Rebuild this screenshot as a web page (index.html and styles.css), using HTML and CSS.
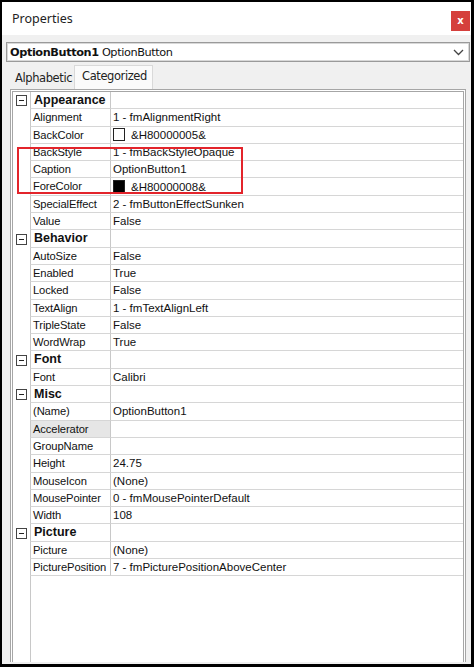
FILE: index.html
```html
<!DOCTYPE html>
<html>
<head>
<meta charset="utf-8">
<link rel="stylesheet" href="styles.css">
</head>
<body>
<div class="window">
  <div class="titlebar">
    <span class="title">Properties</span>
    <span class="close">x</span>
  </div>
  <div class="panel">
    <div class="combo">
      <span class="combo-text"><b>OptionButton1</b> OptionButton</span>
      <svg class="chev" width="11" height="7" viewBox="0 0 11 7"><polyline points="1,1 5.5,5.5 10,1" fill="none" stroke="#444" stroke-width="1.3"/></svg>
    </div>
    <div class="tabs">
      <span class="tab">Alphabetic</span>
      <span class="tab active">Categorized</span>
    </div>
    <div class="grid">
      <div class="row cat"><span class="gut"><span class="minus"></span></span><span class="name">Appearance</span><span class="val"></span></div>
      <div class="row"><span class="gut"></span><span class="name">Alignment</span><span class="val">1 - fmAlignmentRight</span></div>
      <div class="row"><span class="gut"></span><span class="name">BackColor</span><span class="val"><span class="swatch white"></span>&amp;H80000005&amp;</span></div>
      <div class="row"><span class="gut"></span><span class="name">BackStyle</span><span class="val">1 - fmBackStyleOpaque</span></div>
      <div class="row"><span class="gut"></span><span class="name">Caption</span><span class="val">OptionButton1</span></div>
      <div class="row"><span class="gut"></span><span class="name">ForeColor</span><span class="val"><span class="swatch black"></span>&amp;H80000008&amp;</span></div>
      <div class="row"><span class="gut"></span><span class="name">SpecialEffect</span><span class="val">2 - fmButtonEffectSunken</span></div>
      <div class="row"><span class="gut"></span><span class="name">Value</span><span class="val">False</span></div>
      <div class="row cat"><span class="gut"><span class="minus"></span></span><span class="name">Behavior</span><span class="val"></span></div>
      <div class="row"><span class="gut"></span><span class="name">AutoSize</span><span class="val">False</span></div>
      <div class="row"><span class="gut"></span><span class="name">Enabled</span><span class="val">True</span></div>
      <div class="row"><span class="gut"></span><span class="name">Locked</span><span class="val">False</span></div>
      <div class="row"><span class="gut"></span><span class="name">TextAlign</span><span class="val">1 - fmTextAlignLeft</span></div>
      <div class="row"><span class="gut"></span><span class="name">TripleState</span><span class="val">False</span></div>
      <div class="row"><span class="gut"></span><span class="name">WordWrap</span><span class="val">True</span></div>
      <div class="row cat"><span class="gut"><span class="minus"></span></span><span class="name">Font</span><span class="val"></span></div>
      <div class="row"><span class="gut"></span><span class="name">Font</span><span class="val">Calibri</span></div>
      <div class="row cat"><span class="gut"><span class="minus"></span></span><span class="name">Misc</span><span class="val"></span></div>
      <div class="row"><span class="gut"></span><span class="name">(Name)</span><span class="val">OptionButton1</span></div>
      <div class="row"><span class="gut"></span><span class="name sel">Accelerator</span><span class="val"></span></div>
      <div class="row"><span class="gut"></span><span class="name">GroupName</span><span class="val"></span></div>
      <div class="row"><span class="gut"></span><span class="name">Height</span><span class="val">24.75</span></div>
      <div class="row"><span class="gut"></span><span class="name">MouseIcon</span><span class="val">(None)</span></div>
      <div class="row"><span class="gut"></span><span class="name">MousePointer</span><span class="val">0 - fmMousePointerDefault</span></div>
      <div class="row"><span class="gut"></span><span class="name">Width</span><span class="val">108</span></div>
      <div class="row cat"><span class="gut"><span class="minus"></span></span><span class="name">Picture</span><span class="val"></span></div>
      <div class="row"><span class="gut"></span><span class="name">Picture</span><span class="val">(None)</span></div>
      <div class="row"><span class="gut"></span><span class="name">PicturePosition</span><span class="val">7 - fmPicturePositionAboveCenter</span></div>
      <div class="filler"><span class="gut"></span><span class="rest"></span></div>
      <div class="highlight"></div>
    </div>
  </div>
</div>
</body>
</html>
```

FILE: styles.css
```css
html, body {
  margin: 0;
  padding: 0;
  background: #000;
}
body {
  width: 474px;
  height: 667px;
  overflow: hidden;
  font-family: "Liberation Sans", Arial, sans-serif;
}
.window {
  margin: 2px 3px 3px 2px;
  height: 662px;
  background: #f0f0f0;
  display: flex;
  flex-direction: column;
}
.titlebar {
  height: 33px;
  background: #fff;
  display: flex;
  align-items: center;
  justify-content: space-between;
  flex-shrink: 0;
}
.title {
  margin-left: 10px;
  font-family: "Noto Sans", "Open Sans", sans-serif;
  font-size: 12.5px;
  color: #222;
}
.close {
  width: 19px;
  height: 20px;
  margin-right: 1px;
  margin-top: 4px;
  background: #d5403c;
  color: #fff;
  font-family: "DejaVu Sans", sans-serif;
  font-weight: bold;
  font-size: 10px;
  line-height: 19px;
  text-align: center;
}
.panel {
  flex: 1;
  display: flex;
  flex-direction: column;
  padding: 7px 1px 2px 4px;
  min-height: 0;
}
.combo {
  height: 20px;
  box-sizing: border-box;
  border: 1px solid #9a9a9a;
  box-shadow: inset 0 0 0 1px #d8d8d8;
  background: #fff;
  display: flex;
  align-items: center;
  justify-content: space-between;
  padding: 0 5px 0 3px;
  flex-shrink: 0;
}
.combo-text {
  font-family: "DejaVu Sans", sans-serif;
  font-size: 11.3px;
  color: #111;
  letter-spacing: -0.4px;
}
.combo-text b {
  font-weight: bold;
}
.chev {
  display: block;
}
.tabs {
  height: 24px;
  margin-top: 3px;
  display: flex;
  align-items: flex-end;
  padding-left: 4px;
  flex-shrink: 0;
}
.tab {
  font-family: "DejaVu Sans", sans-serif;
  font-size: 11.5px;
  letter-spacing: -0.4px;
  color: #222;
  height: 22px;
  line-height: 22px;
  box-sizing: border-box;
  padding: 0 5px 0 5px;
  width: 64px;
}
.tab.active {
  height: 24px;
  line-height: 21px;
  width: 79px;
  background: #fafafa;
  border: 1px solid #d9d9d9;
  border-bottom: none;
  padding-left: 7px;
}
.grid {
  position: relative;
  flex: 1;
  margin: 0 4px 0 4px;
  border: 3px double #a6a6a6;
  border-bottom: none;
  background: #fff;
  display: flex;
  flex-direction: column;
  font-size: 11.5px;
  color: #111;
  min-height: 0;
}
.row {
  display: flex;
  height: 17.3px;
  flex-shrink: 0;
}
.gut {
  width: 17px;
  flex-shrink: 0;
  display: flex;
  align-items: center;
  justify-content: center;
}
.name {
  width: 80px;
  flex-shrink: 0;
  box-sizing: border-box;
  border-left: 1px solid #c8c8c8;
  border-bottom: 1px solid #d6d6d6;
  padding-left: 2px;
  line-height: 16px;
  white-space: nowrap;
  overflow: hidden;
  font-size: 11.2px;
  letter-spacing: -0.1px;
}
.name.sel {
  background: #e6e6e6;
}
.val {
  flex: 1;
  box-sizing: border-box;
  border-left: 1px solid #c8c8c8;
  border-bottom: 1px solid #d6d6d6;
  padding-left: 2px;
  line-height: 16px;
  white-space: nowrap;
  display: flex;
  align-items: center;
}
.cat .name {
  font-weight: bold;
  font-size: 12.5px;
  letter-spacing: 0;
  padding-left: 3px;
}
.minus {
  width: 9px;
  height: 9px;
  border: 1px solid #444;
  position: relative;
  background: #fff;
}
.minus::after {
  content: "";
  position: absolute;
  left: 2px;
  right: 2px;
  top: 4px;
  height: 1px;
  background: #222;
}
.swatch {
  width: 10px;
  height: 11px;
  border: 1px solid #222;
  margin-right: 6px;
  flex-shrink: 0;
}
.swatch.white { background: #fff; }
.swatch.black { background: #000; }
.filler {
  flex: 1;
  display: flex;
}
.rest {
  flex: 1;
  border-left: 1px solid #c8c8c8;
}
.highlight {
  position: absolute;
  left: 4px;
  top: 55px;
  width: 222px;
  height: 43px;
  border: 2px solid #e3242b;
  pointer-events: none;
}
```
